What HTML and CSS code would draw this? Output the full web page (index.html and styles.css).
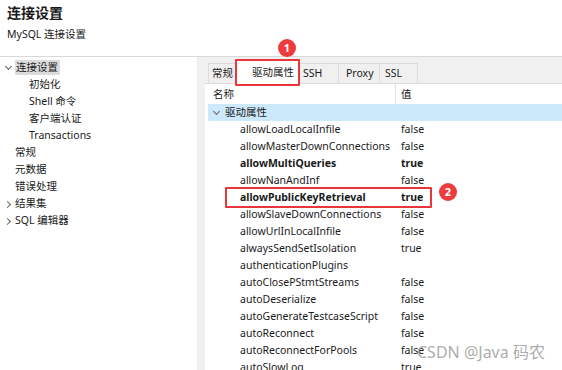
FILE: index.html
```html
<!DOCTYPE html>
<html>
<head>
<meta charset="utf-8">
<link rel="stylesheet" href="styles.css">
</head>
<body>
<div class="page">
  <header class="head">
    <div class="title">连接设置</div>
    <div class="subtitle">MySQL 连接设置</div>
  </header>
  <div class="main">
    <nav class="tree">
      <div class="node top"><span class="chev down"></span><span class="sel">连接设置</span></div>
      <div class="node child">初始化</div>
      <div class="node child">Shell 命令</div>
      <div class="node child">客户端认证</div>
      <div class="node child">Transactions</div>
      <div class="node top"><span class="chev none"></span>常规</div>
      <div class="node top"><span class="chev none"></span>元数据</div>
      <div class="node top"><span class="chev none"></span>错误处理</div>
      <div class="node top"><span class="chev right"></span>结果集</div>
      <div class="node top"><span class="chev right"></span>SQL 编辑器</div>
    </nav>
    <section class="panel">
      <div class="tabs">
        <div class="tab t1">常规</div>
        <div class="tab t2 active">驱动属性</div>
        <div class="tab t3">SSH</div>
        <div class="tab t4">Proxy</div>
        <div class="tab t5">SSL</div>
        <div class="mark box1"></div>
        <div class="badge b1">1</div>
      </div>
      <div class="table">
        <div class="thead"><div class="c1">名称</div><div class="c2">值</div></div>
        <div class="group"><span class="chev down"></span>驱动属性</div>
        <div class="rows">
          <div class="row"><div class="n">allowLoadLocalInfile</div><div class="v">false</div></div>
          <div class="row"><div class="n">allowMasterDownConnections</div><div class="v">false</div></div>
          <div class="row b"><div class="n">allowMultiQueries</div><div class="v">true</div></div>
          <div class="row"><div class="n">allowNanAndInf</div><div class="v">false</div></div>
          <div class="row b"><div class="n">allowPublicKeyRetrieval</div><div class="v">true</div></div>
          <div class="row"><div class="n">allowSlaveDownConnections</div><div class="v">false</div></div>
          <div class="row"><div class="n">allowUrlInLocalInfile</div><div class="v">false</div></div>
          <div class="row"><div class="n">alwaysSendSetIsolation</div><div class="v">true</div></div>
          <div class="row"><div class="n">authenticationPlugins</div><div class="v"></div></div>
          <div class="row"><div class="n">autoClosePStmtStreams</div><div class="v">false</div></div>
          <div class="row"><div class="n">autoDeserialize</div><div class="v">false</div></div>
          <div class="row"><div class="n">autoGenerateTestcaseScript</div><div class="v">false</div></div>
          <div class="row"><div class="n">autoReconnect</div><div class="v">false</div></div>
          <div class="row"><div class="n">autoReconnectForPools</div><div class="v">false</div></div>
          <div class="row"><div class="n">autoSlowLog</div><div class="v">true</div></div>
        </div>
        <div class="mark box2"></div>
        <div class="badge b2">2</div>
      </div>
    </section>
  </div>
  <div class="watermark">CSDN @Java 码农</div>
</div>
</body>
</html>
```
FILE: styles.css
```css
* { box-sizing: border-box; }
html, body { margin: 0; padding: 0; }
body {
  width: 562px; height: 370px; overflow: hidden; background: #fff;
  font-family: "Noto Sans", "Noto Sans CJK SC", sans-serif;
  font-size: 10.5px; color: #1a1a1a;
}
.page { position: relative; width: 562px; height: 370px; overflow: hidden; }
.head { height: 57px; padding: 4px 0 0 7px; border-bottom: 1px solid #d9d9d9; }
.title { font-size: 14px; font-weight: bold; line-height: 18px; }
.subtitle { margin-top: 5px; line-height: 15px; font-size: 10.5px; }
.main { display: flex; height: 313px; }
.tree { width: 197px; padding-top: 2px; flex-shrink: 0; }
.node { height: 17px; line-height: 17px; display: flex; align-items: center; white-space: nowrap; }
.node.top { padding-left: 4px; }
.node.child { padding-left: 29px; }
.chev { width: 11px; height: 17px; display: inline-block; position: relative; flex-shrink: 0; }
.chev.down::before, .chev.right::before {
  content: ""; position: absolute; width: 4px; height: 4px;
  border-right: 1px solid #666; border-bottom: 1px solid #666;
}
.chev.down::before { left: 2px; top: 5px; transform: rotate(45deg); }
.chev.right::before { left: 1px; top: 7px; transform: rotate(-45deg); }
.sel { background: #dcdcdc; padding: 0 2px 0 1px; line-height: 15px; }
.panel { flex: 1; min-width: 0; background: #f0f0f0; padding-left: 8px; display: flex; flex-direction: column; }
.tabs { position: relative; flex: 0 0 27px; height: 27px; display: flex; align-items: flex-end; padding-left: 3px; border-bottom: 1px solid #dcdcdc; }
.tab { height: 20px; line-height: 19px; border: 1px solid #dcdcdc; border-bottom: none; margin-right: -1px; background: #f0f0f0; white-space: nowrap; flex-shrink: 0; }
.tab.t1 { width: 30px; padding-left: 3px; }
.tab.t2 { width: 62px; padding-left: 14px; }
.tab.active { background: #fff; height: 23px; line-height: 21px; position: relative; z-index: 1; margin-bottom: -1px; border-color: #fff; }
.tab.t3 { width: 41px; padding-left: 5px; border-left: none; }
.tab.t4 { width: 42px; padding-left: 7px; }
.tab.t5 { width: 39px; padding-left: 5px; }
.table { position: relative; flex: 1; min-height: 0; background: #fff; }
.thead { display: flex; height: 20px; line-height: 20px; }
.thead .c1 { width: 191px; padding-left: 8px; border-right: 1px solid #e4e4e4; }
.thead .c2 { padding-left: 5px; }
.group { height: 17px; line-height: 17px; background: #cce8fb; margin-left: 3px; display: flex; align-items: center; padding-left: 4px; }
.group .chev { width: 13px; }
.row { display: flex; height: 17px; line-height: 17px; white-space: nowrap; }
.row .n { width: 196px; padding-left: 35px; }
.row .v { flex: 1; }
.row.b { font-weight: bold; }
.mark { position: absolute; border: 2px solid #e8373a; border-radius: 1px; z-index: 3; }
.box1 { left: 30px; top: 2px; width: 65px; height: 27px; }
.box2 { left: 20px; top: 103px; width: 207px; height: 21px; }
.badge {
  position: absolute; z-index: 4; width: 18px; height: 18px; border-radius: 50%;
  background: #ef3b3b; color: #fff; font-size: 11px; font-weight: bold;
  line-height: 18px; text-align: center;
}
.b1 { left: 73px; top: -18px; }
.b2 { left: 234px; top: 99px; }
.watermark {
  position: absolute; left: 417px; top: 341px; font-size: 16px; color: rgba(150,150,150,0.8);
  font-family: "Noto Sans", "Noto Sans CJK SC", sans-serif; z-index: 5; white-space: nowrap;
  line-height: 22px;
}
```
